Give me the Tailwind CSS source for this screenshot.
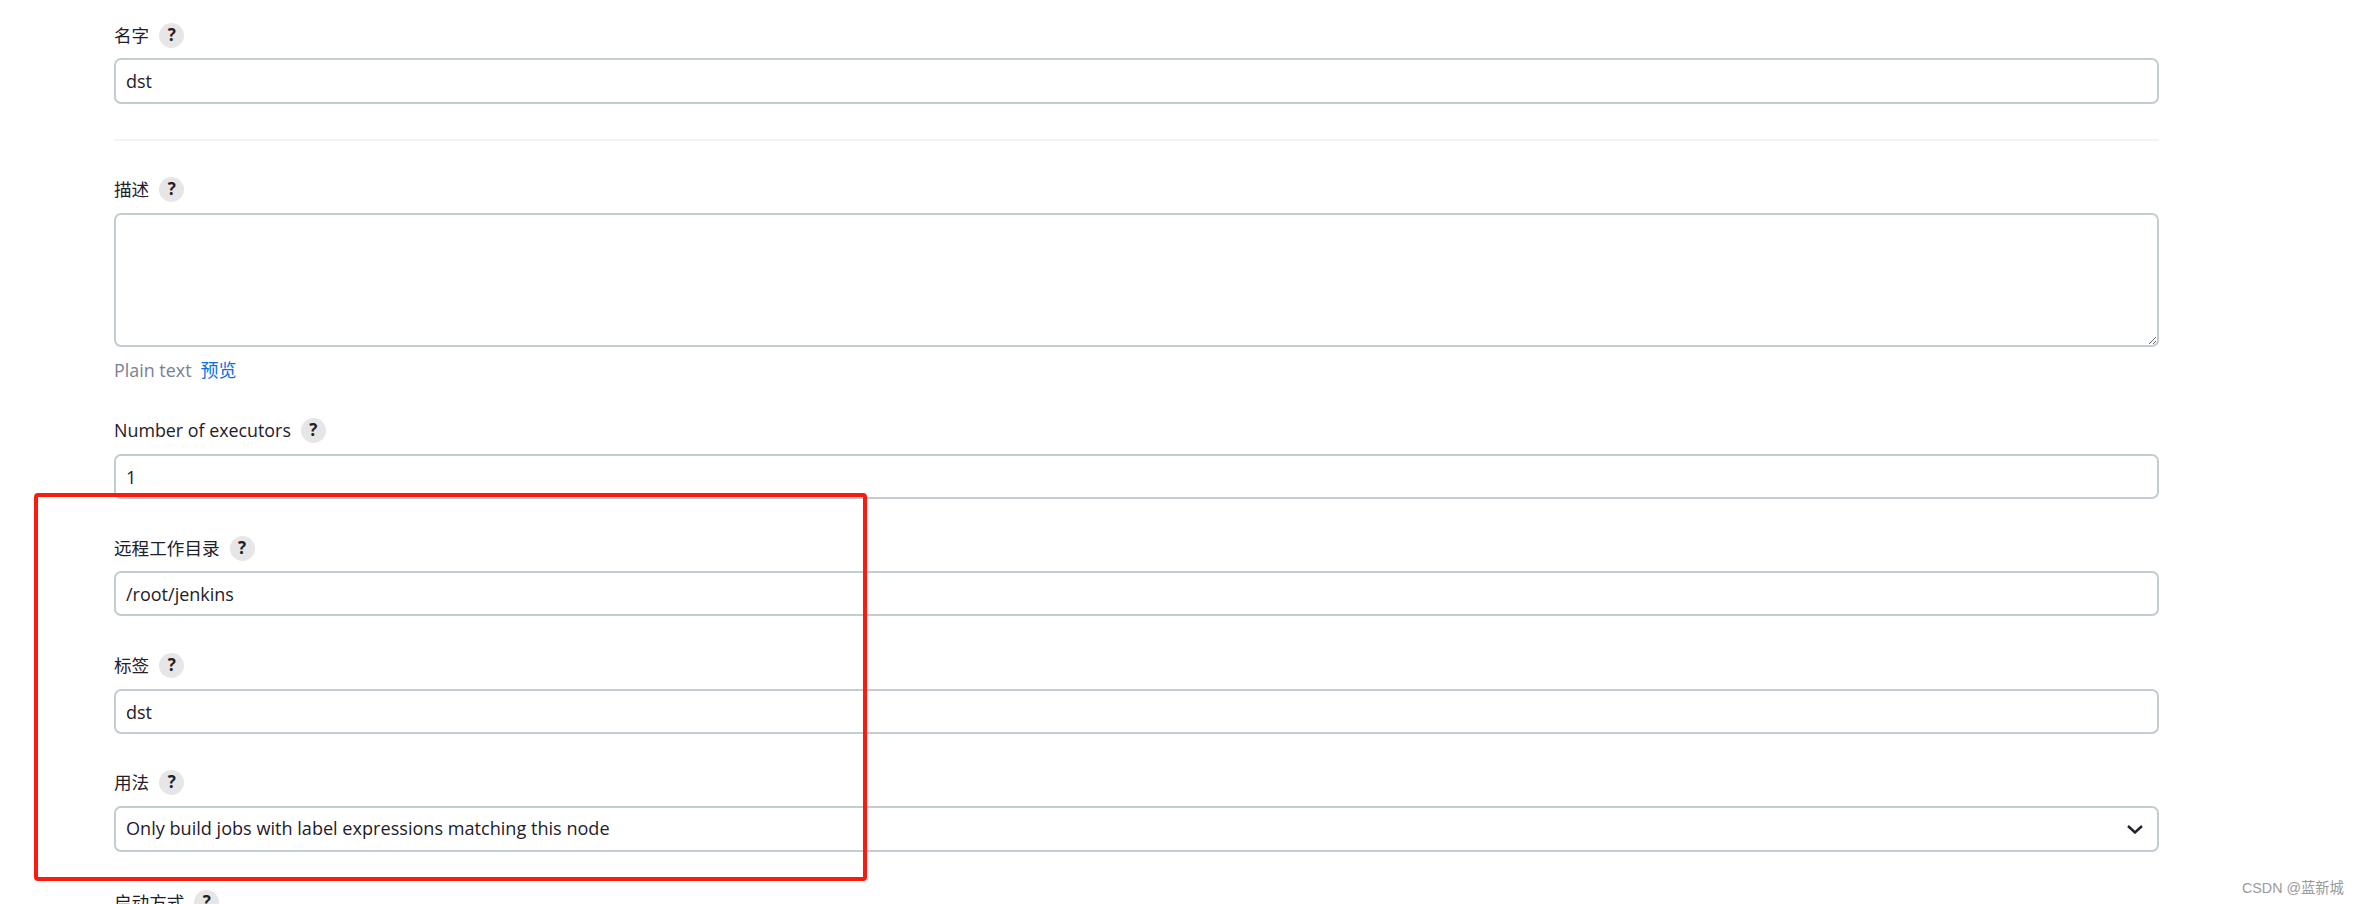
<!DOCTYPE html>
<html lang="zh-CN">
<head>
    <meta charset="UTF-8">
    <meta name="viewport" content="width=device-width, initial-scale=1.0">
    <title>Configure Node</title>
    <script src="https://cdn.jsdelivr.net/npm/@tailwindcss/browser@4"></script>
</head>
<body class="relative h-[904px] overflow-hidden bg-white text-[#1f2029] text-[18px] font-['Open_Sans','Noto_Sans_CJK_SC',sans-serif]">
    <form class="w-[2045px] ml-[114px] pt-[22px]">
        <!-- name -->
        <div class="flex items-center gap-[10px] h-[26px] text-[17.6px]">
            <label>名字</label>
            <span class="flex items-center justify-center w-[25px] h-[25px] rounded-full bg-[#e6e6e6] text-[17px] font-bold">?</span>
        </div>
        <input type="text" value="dst" class="block w-full h-[46px] mt-[10px] px-[10px] border-2 border-[#c3ccd1] rounded-[7px] outline-none">

        <div class="h-[2px] mt-[35px] bg-[#f3f3f5]"></div>

        <!-- description -->
        <div class="flex items-center gap-[10px] h-[26px] mt-[35px] text-[17.6px]">
            <label>描述</label>
            <span class="flex items-center justify-center w-[25px] h-[25px] rounded-full bg-[#e6e6e6] text-[17px] font-bold">?</span>
        </div>
        <textarea class="block w-full h-[134px] mt-[11px] px-[10px] border-2 border-[#c3ccd1] rounded-[7px] outline-none resize-y"></textarea>
        <div class="flex gap-[9px] h-[26px] mt-[10px] items-center text-[17.9px]">
            <span class="text-[#7b7f95]">Plain text</span>
            <a class="text-[#0b6fe8] text-[18px]">预览</a>
        </div>

        <!-- executors -->
        <div class="flex items-center gap-[10px] h-[26px] mt-[34px] text-[17.85px]">
            <label>Number of executors</label>
            <span class="flex items-center justify-center w-[25px] h-[25px] rounded-full bg-[#e6e6e6] text-[17px] font-bold">?</span>
        </div>
        <input type="text" value="1" class="block w-full h-[45px] mt-[11px] px-[10px] border-2 border-[#c3ccd1] rounded-[7px] outline-none">

        <!-- remote dir -->
        <div class="flex items-center gap-[10px] h-[26px] mt-[36px] text-[17.6px]">
            <label>远程工作目录</label>
            <span class="flex items-center justify-center w-[25px] h-[25px] rounded-full bg-[#e6e6e6] text-[17px] font-bold">?</span>
        </div>
        <input type="text" value="/root/jenkins" class="block w-full h-[45px] mt-[10px] px-[10px] border-2 border-[#c3ccd1] rounded-[7px] outline-none">

        <!-- labels -->
        <div class="flex items-center gap-[10px] h-[26px] mt-[36px] text-[17.6px]">
            <label>标签</label>
            <span class="flex items-center justify-center w-[25px] h-[25px] rounded-full bg-[#e6e6e6] text-[17px] font-bold">?</span>
        </div>
        <input type="text" value="dst" class="block w-full h-[45px] mt-[11px] px-[10px] border-2 border-[#c3ccd1] rounded-[7px] outline-none">

        <!-- usage -->
        <div class="flex items-center gap-[10px] h-[26px] mt-[35px] text-[17.6px]">
            <label>用法</label>
            <span class="flex items-center justify-center w-[25px] h-[25px] rounded-full bg-[#e6e6e6] text-[17px] font-bold">?</span>
        </div>
        <div class="flex items-center justify-between w-full h-[46px] mt-[11px] pl-[10px] pr-[14px] border-2 border-[#c3ccd1] rounded-[7px]">
            <span class="text-[18.1px]">Only build jobs with label expressions matching this node</span>
            <svg width="16" height="9" viewBox="0 0 16 9" fill="none" stroke="#1f2029" stroke-width="2.4"><path d="M1 1l7 6.5L15 1"/></svg>
        </div>

        <!-- launch method, cut off by the window -->
        <div class="flex items-center gap-[10px] h-[26px] mt-[37px] text-[17.6px]">
            <label>启动方式</label>
            <span class="flex items-center justify-center w-[25px] h-[25px] rounded-full bg-[#e6e6e6] text-[17px] font-bold">?</span>
        </div>
    </form>

    <!-- annotation drawn over the form -->
    <div class="absolute left-[34px] top-[493px] w-[833px] h-[388px] border-[4px] border-[#fb1a10] rounded-[4px]"></div>
    <div class="absolute left-[2242px] top-[879px] text-[14.3px] leading-[18px] text-[#9a9a9a] font-['Liberation_Sans','Noto_Sans_CJK_SC',sans-serif]">CSDN @蓝新城</div>
</body>
</html>
